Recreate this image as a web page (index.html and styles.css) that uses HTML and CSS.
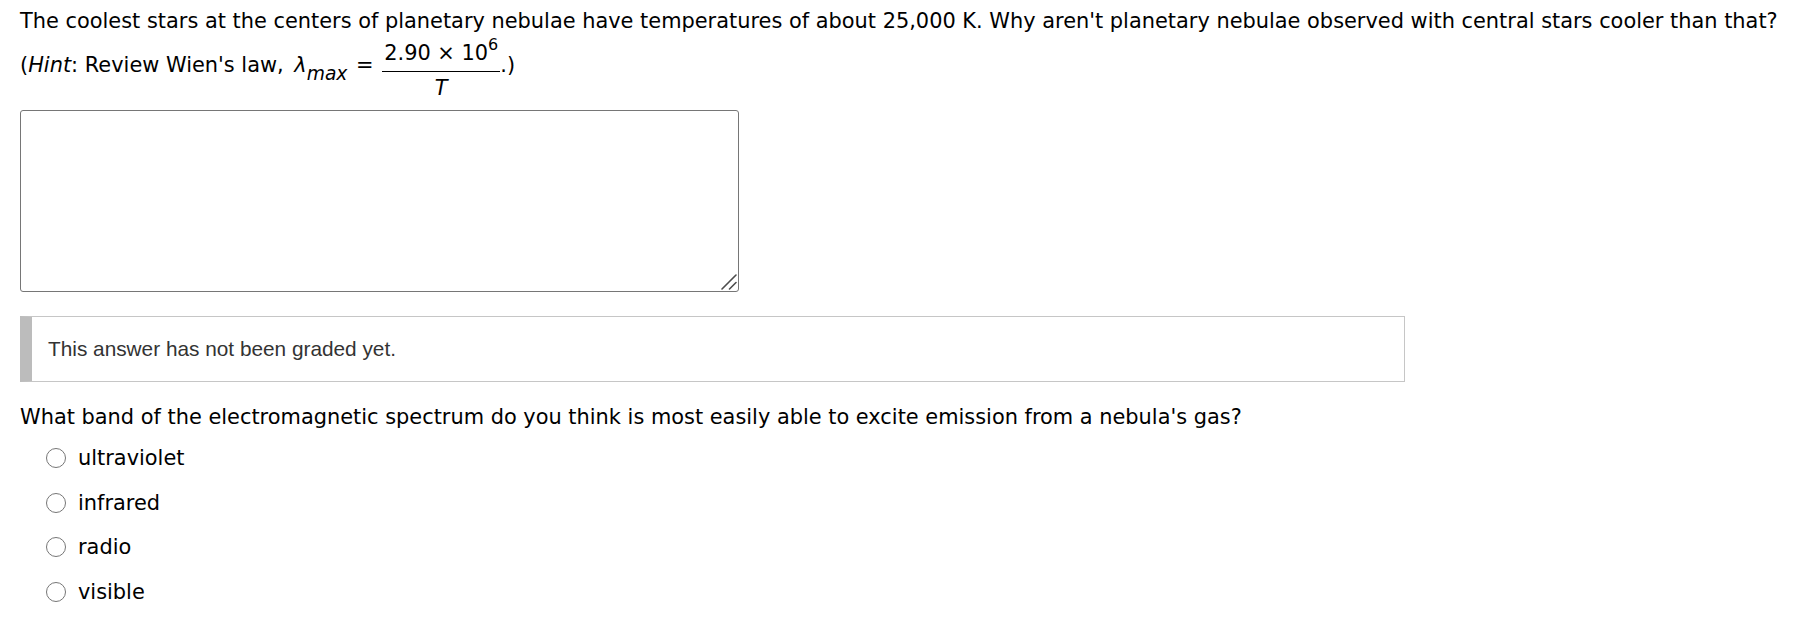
FILE: index.html
```html
<!DOCTYPE html>
<html>
<head>
<meta charset="utf-8">
<link rel="stylesheet" href="styles.css">
</head>
<body>
<div class="page">
  <p class="q">The coolest stars at the centers of planetary nebulae have temperatures of about 25,000 K. Why aren't planetary nebulae observed with central stars cooler than that?</p>
  <p class="hint">(<i>Hint</i>: Review Wien's law, <i class="lam">λ</i><sub class="sub">max</sub> = <span class="frac"><span class="num">2.90 × 10<sup class="sup">6</sup></span><span class="den"><i>T</i></span></span>.)</p>
  <div class="answer-wrap">
    <textarea class="answer"></textarea>
    <svg class="grip" width="16" height="16" viewBox="0 0 16 16" aria-hidden="true">
      <path d="M15 1 L1 15 M15 8.5 L8.5 15" stroke="#4d4d4d" stroke-width="1.6" stroke-linecap="round" fill="none"/>
    </svg>
  </div>
  <div class="grade">This answer has not been graded yet.</div>
  <p class="q2">What band of the electromagnetic spectrum do you think is most easily able to excite emission from a nebula's gas?</p>
  <ul class="opts">
    <li><label class="opt"><input type="radio" name="band"><span>ultraviolet</span></label></li>
    <li><label class="opt"><input type="radio" name="band"><span>infrared</span></label></li>
    <li><label class="opt"><input type="radio" name="band"><span>radio</span></label></li>
    <li><label class="opt"><input type="radio" name="band"><span>visible</span></label></li>
  </ul>
</div>
</body>
</html>
```

FILE: styles.css
```css
html, body {
  margin: 0;
  padding: 0;
  background: #fff;
}
body {
  font-family: Verdana, "DejaVu Sans", sans-serif;
  font-size: 20.9px;
  color: #000;
}
.page {
  padding: 8px 20px 0 20px;
  display: flex;
  flex-direction: column;
  align-items: flex-start;
}
.q {
  margin: 0;
  line-height: 26px;
  white-space: nowrap;
}
.hint {
  margin: 6px 0 0 0;
  line-height: 26px;
  height: 50px;
  display: flex;
  align-items: center;
  white-space: pre;
}
.lam {
  font-style: italic;
  margin-left: 4px;
}
.sub {
  font-style: italic;
  font-size: 18.7px;
  position: relative;
  top: 9px;
  vertical-align: baseline;
  margin-right: 2px;
}
.frac {
  display: inline-flex;
  flex-direction: column;
  align-items: center;
  margin-top: 11px;
  margin-left: 2px;
}
.num {
  line-height: 24px;
  padding: 0 2px 4px 2px;
  border-bottom: 1px solid #000;
}
.sup {
  font-size: 16px;
  vertical-align: baseline;
  position: relative;
  top: -10px;
}
.den {
  line-height: 24px;
  padding-top: 4px;
}
.answer-wrap {
  position: relative;
  width: 719px;
  height: 182px;
  margin: 20px 0 0 0;
}
.answer {
  box-sizing: border-box;
  display: block;
  width: 100%;
  height: 100%;
  margin: 0;
  border: 1px solid #767676;
  border-radius: 3px;
  padding: 2px;
  font-family: inherit;
  resize: none;
  background: #fff;
}
.grip {
  position: absolute;
  right: 2px;
  bottom: 2px;
  pointer-events: none;
}
.grade {
  box-sizing: border-box;
  width: 1385px;
  height: 66px;
  margin-top: 24px;
  border: 1px solid #c6c6c6;
  border-left: 12px solid #bcbcbc;
  padding-left: 16px;
  display: flex;
  align-items: center;
  font-family: "Liberation Sans", Arial, sans-serif;
  font-size: 20.8px;
  color: #333;
}
.q2 {
  margin: 22px 0 0 0;
  line-height: 26px;
}
.opts {
  list-style: none;
  margin: 15px 0 0 0;
  padding: 0 0 0 26px;
  display: flex;
  flex-direction: column;
  gap: 18.5px;
}
.opt {
  display: flex;
  align-items: center;
  gap: 12px;
  line-height: 26px;
}
.opt input {
  margin: 0;
  width: 20px;
  height: 20px;
}
```
